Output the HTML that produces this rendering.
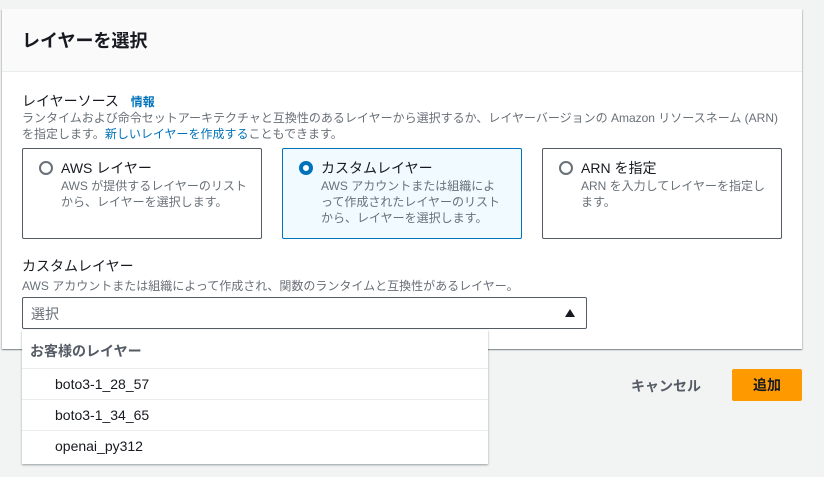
<!DOCTYPE html>
<html><head><meta charset="utf-8"><style>
*{box-sizing:border-box;margin:0;padding:0}
body{width:824px;height:477px;background:#f2f3f3;font-family:"Liberation Sans","Noto Sans CJK JP",sans-serif;color:#16191f;position:relative;overflow:hidden}
.a{position:absolute;white-space:nowrap}
.panel{position:absolute;left:2px;top:9px;width:800px;height:340px;background:#fff;box-shadow:0 1px 1px rgba(0,28,36,.3),1px 1px 1px rgba(0,28,36,.15),-1px 1px 1px rgba(0,28,36,.15)}
.head{position:absolute;left:0;top:0;width:800px;height:63px;background:#fafafa;border-bottom:1px solid #eaeded}
.card{position:absolute;top:148px;width:240px;height:91px;border:1px solid #545b64;border-radius:2px;background:#fff}
.card.sel{border-color:#0073bb;background:#f1faff}
.radio{position:absolute;left:16px;top:12px;width:14px;height:14px;border:2px solid #687078;border-radius:50%}
.sel .radio{border:4px solid #0073bb;background:#fff}
.ct{position:absolute;left:38px;top:9px;font-size:14px}
.cd{position:absolute;left:38px;top:29px;font-size:12px;color:#687078;line-height:16px;white-space:nowrap}
.g{color:#687078;font-size:12px}
.dd{position:absolute;left:22px;top:330px;width:466px;height:134px;background:#fff;box-shadow:0 1px 2px rgba(0,28,36,.4)}
.it{position:absolute;left:0;width:466px;border-top:1px solid #eaeded;height:31px;font-size:14px;padding-left:33px;line-height:30px}
</style></head><body>
<div class="panel"><div class="head"></div></div>
<div class="a" style="left:22px;top:27px;font-size:18px;font-weight:bold">レイヤーを選択</div>
<div class="a" style="left:22px;top:91px;font-size:14px">レイヤーソース <span style="color:#0073bb;font-weight:bold;font-size:12px;margin-left:8px">情報</span></div>
<div class="a g" style="left:22px;top:110px;line-height:16px">ランタイムおよび命令セットアーキテクチャと互換性のあるレイヤーから選択するか、レイヤーバージョンの Amazon リソースネーム (ARN)<br>を指定します。<span style="color:#0073bb">新しいレイヤーを作成する</span>こともできます。</div>
<div class="card" style="left:22px"><div class="radio"></div><div class="ct">AWS レイヤー</div><div class="cd">AWS が提供するレイヤーのリスト<br>から、レイヤーを選択します。</div></div>
<div class="card sel" style="left:282px"><div class="radio"></div><div class="ct">カスタムレイヤー</div><div class="cd">AWS アカウントまたは組織によ<br>って作成されたレイヤーのリスト<br>から、レイヤーを選択します。</div></div>
<div class="card" style="left:542px"><div class="radio"></div><div class="ct">ARN を指定</div><div class="cd">ARN を入力してレイヤーを指定し<br>ます。</div></div>
<div class="a" style="left:22px;top:256px;font-size:14px">カスタムレイヤー</div>
<div class="a g" style="left:22px;top:277px">AWS アカウントまたは組織によって作成され、関数のランタイムと互換性があるレイヤー。</div>
<div class="a" style="left:22px;top:297px;width:565px;height:32px;border:1px solid #545b64;border-radius:2px;background:#fff"></div>
<div class="a" style="left:31px;top:304px;font-size:14px;color:#687078">選択</div>
<svg class="a" style="left:564px;top:308px" width="12" height="10"><path d="M6 1L11 9H1Z" fill="#16191f"/></svg>
<div class="dd">
<div class="a" style="left:8px;top:11px;font-size:14px;font-weight:bold;color:#545b64">お客様のレイヤー</div>
<div class="it" style="top:38px">boto3-1_28_57</div>
<div class="it" style="top:69px">boto3-1_34_65</div>
<div class="it" style="top:100px">openai_py312</div>
</div>
<div class="a" style="left:631px;top:376px;font-size:14px;font-weight:bold;color:#545b64">キャンセル</div>
<div class="a" style="left:732px;top:369px;width:70px;height:32px;background:#ff9900;border-radius:2px;font-size:14px;font-weight:bold;text-align:center;line-height:32px">追加</div>
</body></html>
